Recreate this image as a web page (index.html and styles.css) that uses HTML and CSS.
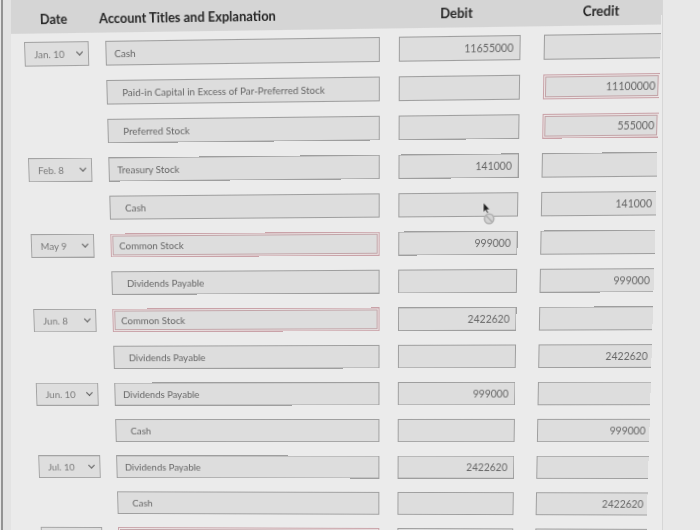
FILE: index.html
```html
<!DOCTYPE html>
<html>
<head>
<meta charset="utf-8">
<link rel="stylesheet" href="styles.css">
</head>
<body>
<div class="page">
  <div class="strip"></div>
  <div class="panel">
    <div class="sheet">
      <div class="header">
        <div class="h-date">Date</div>
        <div class="h-acct">Account Titles and Explanation</div>
        <div class="h-debit">Debit</div>
        <div class="h-credit">Credit</div>
      </div>
      <div class="rows">
        <div class="row">
          <div class="date"><span>Jan. 10</span><i class="chev"></i></div>
          <div class="field acct">Cash</div>
          <div class="field debit">11655000</div>
          <div class="field credit"></div>
        </div>
        <div class="row">
          <div class="nodate"></div>
          <div class="field acct sub">Paid-in Capital in Excess of Par-Preferred Stock</div>
          <div class="field debit"></div>
          <div class="field credit bad">11100000</div>
        </div>
        <div class="row">
          <div class="nodate"></div>
          <div class="field acct sub">Preferred Stock</div>
          <div class="field debit"></div>
          <div class="field credit bad">555000</div>
        </div>
        <div class="row">
          <div class="date"><span>Feb. 8</span><i class="chev"></i></div>
          <div class="field acct">Treasury Stock</div>
          <div class="field debit">141000</div>
          <div class="field credit"></div>
        </div>
        <div class="row">
          <div class="nodate"></div>
          <div class="field acct sub">Cash</div>
          <div class="field debit cursor-host">
            <svg class="cursor" width="18" height="26" viewBox="0 0 18 26">
              <circle cx="10" cy="17" r="4.7" fill="#d3d3d3" stroke="#b0b0b0" stroke-width="1.6"/>
              <path d="M6.8 13.8 L13.2 20.2" stroke="#b0b0b0" stroke-width="1.6"/>
              <path d="M4 1 L4 10.5 L6.3 8.5 L8 11.8 L9.3 11.1 L7.7 7.9 L10.6 7.9 Z" fill="#1e1e1e" stroke="#f2f2f2" stroke-width="0.6"/>
            </svg>
          </div>
          <div class="field credit">141000</div>
        </div>
        <div class="row">
          <div class="date"><span>May 9</span><i class="chev"></i></div>
          <div class="field acct bad">Common Stock</div>
          <div class="field debit">999000</div>
          <div class="field credit"></div>
        </div>
        <div class="row">
          <div class="nodate"></div>
          <div class="field acct sub">Dividends Payable</div>
          <div class="field debit"></div>
          <div class="field credit">999000</div>
        </div>
        <div class="row">
          <div class="date"><span>Jun. 8</span><i class="chev"></i></div>
          <div class="field acct bad">Common Stock</div>
          <div class="field debit">2422620</div>
          <div class="field credit"></div>
        </div>
        <div class="row">
          <div class="nodate"></div>
          <div class="field acct sub">Dividends Payable</div>
          <div class="field debit"></div>
          <div class="field credit">2422620</div>
        </div>
        <div class="row">
          <div class="date"><span>Jun. 10</span><i class="chev"></i></div>
          <div class="field acct">Dividends Payable</div>
          <div class="field debit">999000</div>
          <div class="field credit"></div>
        </div>
        <div class="row">
          <div class="nodate"></div>
          <div class="field acct sub">Cash</div>
          <div class="field debit"></div>
          <div class="field credit">999000</div>
        </div>
        <div class="row">
          <div class="date"><span>Jul. 10</span><i class="chev"></i></div>
          <div class="field acct">Dividends Payable</div>
          <div class="field debit">2422620</div>
          <div class="field credit"></div>
        </div>
        <div class="row">
          <div class="nodate"></div>
          <div class="field acct sub">Cash</div>
          <div class="field debit"></div>
          <div class="field credit">2422620</div>
        </div>
        <div class="row">
          <div class="date"><span></span><i class="chev"></i></div>
          <div class="field acct bad"></div>
          <div class="field debit"></div>
          <div class="field credit"></div>
        </div>
      </div>
    </div>
  </div>
  <div class="rest"></div>
</div>
</body>
</html>
```

FILE: styles.css
```css
html, body {
  margin: 0;
  padding: 0;
}
body {
  width: 700px;
  height: 530px;
  overflow: hidden;
  background: #e6e6e6;
  font-family: Lato, "Open Sans", Arial, sans-serif;
}
.page {
  display: flex;
  height: 530px;
}
.strip {
  width: 8px;
  margin-left: 1px;
  border-left: 2px solid #939393;
  background: #e3e3e3;
  flex: none;
}
.panel {
  width: 651px;
  flex: none;
  background: #ebebeb;
  border-right: 1px solid #d6d6d6;
  overflow: hidden;
}
.rest {
  flex: 1;
  background: #e8e8e8;
}
/* photo perspective of the whole sheet, mapped from page origin */
.sheet {
  margin-top: -10px;
  transform-origin: -11px 10px;
  transform: matrix3d(0.97799, -0.015316, 0, -0.000035409,
                      0.038063, 1.038704, 0, 0.000103238,
                      0, 0, 1, 0,
                      -0.8088, 4.06033, 0, 1);
}
.header {
  height: 29px;
  padding-top: 10px;
  background: #d5d5d5;
  display: flex;
  align-items: center;
  font-weight: 700;
  font-size: 13px;
  color: #262626;
}
.h-date {
  margin-left: 30px;
  width: 61px;
}
.h-acct {
  width: 290px;
}
.h-debit {
  width: 120px;
  margin-left: 13px;
  text-align: center;
}
.h-credit {
  width: 120px;
  margin-left: 24px;
  text-align: center;
}
.rows {
  padding-top: 8px;
  display: flex;
  flex-direction: column;
  gap: 14px;
}
.row {
  display: flex;
  padding-left: 13px;
  height: 24px;
}
.date, .nodate {
  width: 66px;
  flex: none;
  box-sizing: border-box;
}
.date {
  border: 1px solid #a3a3a3;
  background: #dedede;
  display: flex;
  align-items: center;
  padding-left: 9px;
  font-size: 10px;
  color: #7a7a7a;
}
.date span {
  flex: 1;
}
.chev {
  width: 4px;
  height: 4px;
  border-right: 1.3px solid #555;
  border-bottom: 1.3px solid #555;
  transform: rotate(45deg);
  margin-right: 6px;
  margin-top: -3px;
}
.field {
  box-sizing: border-box;
  height: 24px;
  border: 1px solid #9e9e9e;
  background: #dddddd;
  font-size: 10px;
  color: #666;
  display: flex;
  align-items: center;
  white-space: nowrap;
  overflow: hidden;
}
.acct {
  margin-left: 17px;
  width: 277px;
  padding-left: 8px;
}
.acct.sub {
  padding-left: 15px;
}
.debit {
  margin-left: 19px;
  width: 121px;
  justify-content: flex-end;
  padding-right: 6px;
  font-size: 10.5px;
}
.credit {
  margin-left: 23px;
  width: 115px;
  border-right: none;
  justify-content: flex-end;
  padding-right: 4px;
  font-size: 10.5px;
}
.bad {
  border-color: #c9a2a8;
  box-shadow: inset 0 0 0 1px #ece6e6, inset 0 0 0 2px #c2a4a8;
}
.cursor-host {
  position: relative;
  overflow: visible;
}
.cursor {
  position: absolute;
  left: 81px;
  top: 8px;
}
```
